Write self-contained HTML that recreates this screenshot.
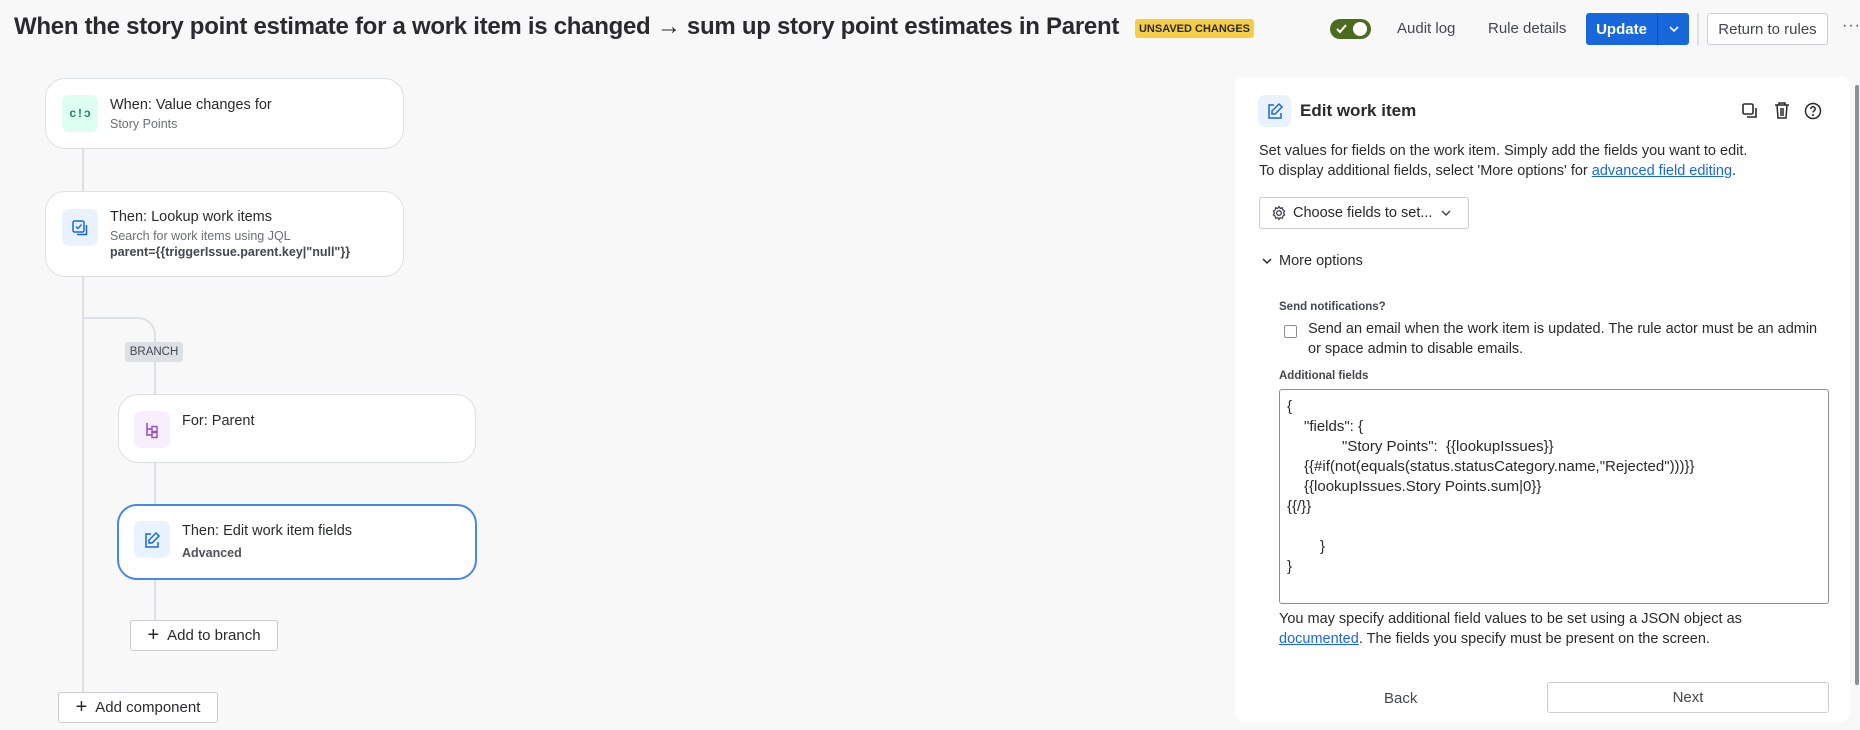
<!DOCTYPE html>
<html><head><meta charset="utf-8"><style>
*{box-sizing:border-box;margin:0;padding:0}
body{width:1860px;height:730px;background:#f8f8f8;font-family:"Liberation Sans",sans-serif;color:#292a2e;position:relative;overflow:hidden}
.a{position:absolute}
.card{position:absolute;background:#fff;border:1px solid #dcdfe4;border-radius:20px}
.ib{position:absolute;width:36px;height:37px;border-radius:7px;display:flex;align-items:center;justify-content:center}
.t{position:absolute;font-size:14.5px;color:#292a2e;white-space:nowrap}
.s{position:absolute;font-size:12.5px;color:#6b6e76;white-space:nowrap}
.vl{position:absolute;width:2px;background:#dcdfe4}
.btn{position:absolute;border:1px solid #c9ccd2;border-radius:3px;background:#fff;font-size:15px;display:flex;align-items:center;justify-content:center;color:#292a2e}
.code{position:absolute;font-size:15px;white-space:pre;color:#292a2e}
</style></head><body>
<div class="a" style="left:14px;top:13px;font-size:24px;font-weight:bold;white-space:nowrap;letter-spacing:-0.28px">When the story point estimate for a work item is changed → sum up story point estimates in Parent</div>
<div class="a" style="left:1135px;top:19px;width:119px;height:19px;background:#f5cd47;border-radius:3px;font-size:11px;font-weight:bold;display:flex;align-items:center;justify-content:center;color:#292a2e">UNSAVED CHANGES</div>
<div class="a" style="left:1330px;top:19px;width:41px;height:20px;background:#4c6b1f;border-radius:10px"><div class="a" style="left:23px;top:3px;width:14px;height:14px;background:#fff;border-radius:50%"></div><svg class="a" style="left:6px;top:5px" width="11" height="10" viewBox="0 0 11 10"><path d="M1 5l3 3 6-7" stroke="#fff" stroke-width="2" fill="none"/></svg></div>
<div class="t" style="left:1397px;top:20px;font-size:15px;color:#44474f">Audit log</div>
<div class="t" style="left:1488px;top:20px;font-size:15px;color:#44474f">Rule details</div>
<div class="a" style="left:1586px;top:13px;width:103px;height:32px;background:#1868db;border-radius:3px"><div class="a" style="left:0;top:0;width:71px;height:32px;color:#fff;font-weight:bold;font-size:15px;display:flex;align-items:center;justify-content:center">Update</div><div class="a" style="left:71px;top:0;width:1px;height:32px;background:#0c4fb0"></div><svg class="a" style="left:82px;top:11px" width="12" height="10"><path d="M2 3l4 4 4-4" stroke="#fff" stroke-width="1.6" fill="none"/></svg></div>
<div class="a" style="left:1697px;top:13px;width:2px;height:32px;background:#dcdfe4"></div>
<div class="btn" style="left:1707px;top:13px;width:121px;height:32px;color:#44474f">Return to rules</div>
<div class="t" style="left:1842px;top:17px;font-size:16px;color:#44474f;letter-spacing:1px">···</div>

<div class="vl" style="left:82px;top:149px;height:42px"></div>
<div class="vl" style="left:82px;top:277px;height:415px"></div>
<div class="a" style="left:83px;top:317px;width:73px;height:40px;border-top:2px solid #dcdfe4;border-right:2px solid #dcdfe4;border-top-right-radius:18px"></div>
<div class="vl" style="left:154px;top:360px;height:260px"></div>
<div class="a" style="left:125px;top:342px;width:58px;height:20px;background:#dcdfe4;border-radius:3px;font-size:11.5px;color:#44474f;display:flex;align-items:center;justify-content:center">BRANCH</div>

<div class="card" style="left:45px;top:78px;width:359px;height:71px"></div>
<div class="ib" style="left:62px;top:95px;background:#dcfff1"><span style="font-size:12px;color:#1f845a;font-weight:bold;font-family:'Liberation Mono',monospace">c!ↄ</span></div>
<div class="t" style="left:110px;top:97px">When: Value changes for</div>
<div class="s" style="left:110px;top:117px">Story Points</div>

<div class="card" style="left:45px;top:191px;width:359px;height:86px"></div>
<div class="ib" style="left:62px;top:209px;background:#e9f2ff"><svg width="18" height="18" viewBox="0 0 18 18"><rect x="2" y="2" width="11" height="11" rx="1.5" stroke="#1868db" stroke-width="1.5" fill="none"/><path d="M5 7.5l2 2 3.5-4" stroke="#1868db" stroke-width="1.4" fill="none"/><path d="M15.5 6v9.5H6" stroke="#1868db" stroke-width="1.5" fill="none"/></svg></div>
<div class="t" style="left:110px;top:209px">Then: Lookup work items</div>
<div class="s" style="left:110px;top:229px">Search for work items using JQL</div>
<div class="s" style="left:110px;top:245px;font-weight:bold;color:#44474f">parent={{triggerIssue.parent.key|"null"}}</div>

<div class="card" style="left:118px;top:394px;width:358px;height:69px"></div>
<div class="ib" style="left:134px;top:411px;background:#f8eefe"><svg width="16" height="18" viewBox="0 0 16 18"><path d="M3 2v12h5M3 8h5" stroke="#964ac0" stroke-width="1.5" fill="none"/><rect x="8" y="5.5" width="5" height="5" stroke="#964ac0" stroke-width="1.4" fill="none"/><rect x="8" y="11.5" width="5" height="5" stroke="#964ac0" stroke-width="1.4" fill="none"/></svg></div>
<div class="t" style="left:182px;top:413px">For: Parent</div>

<div class="card" style="left:117px;top:504px;width:360px;height:76px;border:2px solid #4688ec"></div>
<div class="ib" style="left:134px;top:521px;background:#e9f2ff"><svg width="18" height="18" viewBox="0 0 18 18"><path d="M8 3H3v13h12v-5" stroke="#1868db" stroke-width="1.5" fill="none"/><path d="M13 2l3 3-7 7H6V9z" stroke="#1868db" stroke-width="1.5" fill="none"/></svg></div>
<div class="t" style="left:182px;top:523px">Then: Edit work item fields</div>
<div class="s" style="left:182px;top:546px;font-weight:bold;color:#505258">Advanced</div>

<div class="btn" style="left:130px;top:620px;width:148px;height:31px"><span style="font-size:20px;margin-right:8px;font-weight:300">+</span>Add to branch</div>
<div class="btn" style="left:58px;top:692px;width:160px;height:31px"><span style="font-size:20px;margin-right:8px;font-weight:300">+</span>Add component</div>

<div class="a" style="left:1235px;top:77px;width:615px;height:645px;background:#fff;border-radius:8px"></div>
<div class="a" style="left:1855px;top:85px;width:4px;height:600px;background:#8c8f97;border-radius:2px"></div>
<div class="ib" style="left:1258px;top:95px;width:33px;height:32px;background:#e9f2ff"><svg width="18" height="18" viewBox="0 0 18 18"><path d="M8 3H3v13h12v-5" stroke="#1868db" stroke-width="1.5" fill="none"/><path d="M13 2l3 3-7 7H6V9z" stroke="#1868db" stroke-width="1.5" fill="none"/></svg></div>
<div class="t" style="left:1300px;top:101px;font-size:17px;font-weight:bold">Edit work item</div>
<svg class="a" style="left:1741px;top:102px" width="18" height="18" viewBox="0 0 18 18"><rect x="2" y="2" width="10" height="10" rx="1.5" stroke="#292a2e" stroke-width="1.6" fill="none"/><path d="M15 6v9H6" stroke="#292a2e" stroke-width="1.6" fill="none"/></svg>
<svg class="a" style="left:1773px;top:101px" width="18" height="19" viewBox="0 0 18 19"><path d="M2 4h14M6 4V2h6v2M4 4l1 13h8l1-13M8 7v8M10 7v8" stroke="#292a2e" stroke-width="1.5" fill="none"/></svg>
<svg class="a" style="left:1804px;top:102px" width="18" height="18" viewBox="0 0 18 18"><circle cx="9" cy="9" r="7.5" stroke="#292a2e" stroke-width="1.5" fill="none"/><path d="M6.8 7a2.2 2.2 0 1 1 3 2c-.6.3-.8.7-.8 1.5" stroke="#292a2e" stroke-width="1.5" fill="none"/><circle cx="9" cy="13" r="1" fill="#292a2e"/></svg>
<div class="t" style="left:1259px;top:143px;font-size:14.5px">Set values for fields on the work item. Simply add the fields you want to edit.</div>
<div class="t" style="left:1259px;top:163px;font-size:14.5px">To display additional fields, select 'More options' for <span style="color:#1868db;text-decoration:underline">advanced field editing</span>.</div>
<div class="btn" style="left:1259px;top:197px;width:210px;height:32px;justify-content:flex-start;padding-left:11px;font-size:14.5px"><svg width="16" height="16" viewBox="0 0 16 16" style="margin-right:6px"><circle cx="8" cy="8" r="2.3" stroke="#44474f" stroke-width="1.4" fill="none"/><path d="M8 1.5l1.2 1.8 2.1-.5.5 2.1 1.8 1.2-1.1 1.9 1.1 1.9-1.8 1.2-.5 2.1-2.1-.5L8 14.5l-1.2-1.8-2.1.5-.5-2.1-1.8-1.2L3.5 8 2.4 6.1l1.8-1.2.5-2.1 2.1.5z" stroke="#44474f" stroke-width="1.3" fill="none"/></svg>Choose fields to set...<svg width="12" height="10" style="margin-left:8px"><path d="M2 3l4 4 4-4" stroke="#44474f" stroke-width="1.5" fill="none"/></svg></div>
<svg class="a" style="left:1261px;top:256px" width="12" height="10"><path d="M2 3l4 4 4-4" stroke="#292a2e" stroke-width="1.5" fill="none"/></svg>
<div class="t" style="left:1279px;top:253px;font-size:14.5px">More options</div>
<div class="t" style="left:1279px;top:301px;font-size:11.5px;font-weight:bold;color:#44474f">Send notifications?</div>
<div class="a" style="left:1284px;top:325px;width:13px;height:13px;border:1.5px solid #8c8f97;border-radius:2px"></div>
<div class="t" style="left:1308px;top:321px;font-size:14.5px">Send an email when the work item is updated. The rule actor must be an admin</div>
<div class="t" style="left:1308px;top:341px;font-size:14.5px">or space admin to disable emails.</div>
<div class="t" style="left:1279px;top:370px;font-size:11.5px;font-weight:bold;color:#44474f">Additional fields</div>
<div class="a" style="left:1279px;top:389px;width:550px;height:215px;border:1px solid #8c8f97;border-radius:3px"></div>
<div class="code" style="left:1287px;top:398px">{</div>
<div class="code" style="left:1304px;top:418px">"fields": {</div>
<div class="code" style="left:1342px;top:438px">"Story Points":  {{lookupIssues}}</div>
<div class="code" style="left:1304px;top:458px">{{#if(not(equals(status.statusCategory.name,"Rejected")))}}</div>
<div class="code" style="left:1304px;top:478px">{{lookupIssues.Story Points.sum|0}}</div>
<div class="code" style="left:1287px;top:498px">{{/}}</div>
<div class="code" style="left:1320px;top:538px">}</div>
<div class="code" style="left:1287px;top:558px">}</div>
<div class="t" style="left:1279px;top:611px;font-size:14.5px">You may specify additional field values to be set using a JSON object as</div>
<div class="t" style="left:1279px;top:631px;font-size:14.5px"><span style="color:#1868db;text-decoration:underline">documented</span>. The fields you specify must be present on the screen.</div>
<div class="t" style="left:1384px;top:690px;font-size:15px;color:#44474f">Back</div>
<div class="btn" style="left:1547px;top:682px;width:282px;height:31px;color:#44474f">Next</div>
</body></html>
